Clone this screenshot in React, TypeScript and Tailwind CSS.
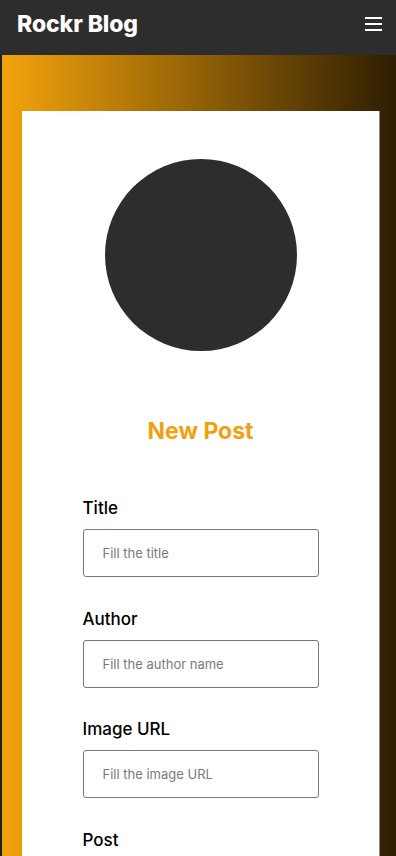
export default function App() {
  const fields = [
    { label: "Title", ph: "Fill the title" },
    { label: "Author", ph: "Fill the author name" },
    { label: "Image URL", ph: "Fill the image URL" },
  ];
  return (
    <div className="w-[396px] h-[856px] overflow-hidden bg-[#1e2228] font-['Inter',sans-serif]">
      <header className="h-[55px] bg-[#2d2d2d] flex items-center justify-between pl-[17px] pr-[14px] pb-[8px]">
        <h1 className="text-white font-extrabold text-[23px] leading-[26px] tracking-[-0.1px]">Rockr Blog</h1>
        <div className="flex flex-col gap-[4.5px] w-[17px] mt-[1px]">
          <span className="block h-[1.5px] bg-white" />
          <span className="block h-[1.5px] bg-white" />
          <span className="block h-[1.5px] bg-white" />
        </div>
      </header>
      <main className="ml-[2px] h-[801px] bg-[linear-gradient(to_right,#f5a30c,#2e1e02)] pt-[56px] pl-[20px] pr-[16px]">
        <div className="w-[358px] h-[800px] bg-white border-r border-[#8a8a8a] flex flex-col items-center pt-[48px]">
          <div className="w-[192px] h-[192px] rounded-full bg-[#2d2d2d]" />
          <h2 className="mt-[67px] text-[#f29f12] font-bold text-[23px] leading-[26px]">New Post</h2>
          <form className="mt-[54px] w-[236px] flex flex-col">
            {fields.map((f) => (
              <div key={f.label} className="flex flex-col mb-[31.5px]">
                <label className="text-[17px] leading-[20px] font-medium text-black mb-[11px]">{f.label}</label>
                <input
                  placeholder={f.ph}
                  className="h-[48px] w-[236px] border border-[#777] rounded-[3px] px-[19px] text-[13px] placeholder:text-[#7a7a7a] outline-none"
                />
              </div>
            ))}
            <label className="text-[17px] leading-[20px] font-medium text-black">Post</label>
          </form>
        </div>
      </main>
    </div>
  );
}
